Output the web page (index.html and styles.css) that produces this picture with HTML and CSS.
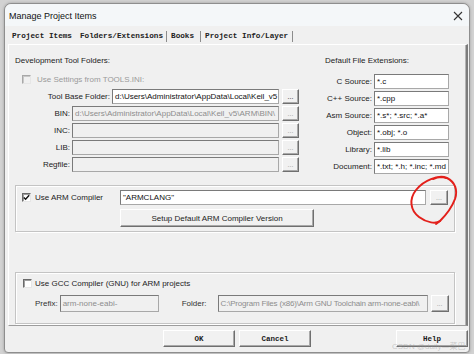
FILE: index.html
```html
<!DOCTYPE html>
<html lang="en">
<head>
  <meta charset="utf-8">
  <title>Manage Project Items</title>
  <meta name="viewport" content="width=device-width, initial-scale=1">
  <link rel="stylesheet" href="styles.css">
</head>
<body>

<!-- dialog window -->
<div class="window">
  <div class="titlebar">
    <span class="title">Manage Project Items</span>
    <svg class="close" width="10" height="10" viewBox="0 0 10 10"><path d="M1 1L9 9M9 1L1 9" stroke="#333" stroke-width="1.1" fill="none"/></svg>
  </div>

  <div class="tabs">
    <span class="tab first">Project Items</span>
    <span class="tab active">Folders/Extensions</span>
    <span class="tab books">Books</span>
    <span class="tab">Project Info/Layer</span>
  </div>

  <div class="panel">
    <div class="top">
      <!-- left: tool folders -->
      <div class="folders">
        <div class="heading">Development Tool Folders:</div>
        <div class="row">
          <span class="check off"></span>
          <span class="dim">Use Settings from TOOLS.INI:</span>
        </div>
        <div class="row">
          <span class="lbl wide">Tool Base Folder:</span>
          <span class="field">d:\Users\Administrator\AppData\Local\Keil_v5</span>
          <span class="btn dots">...</span>
        </div>
        <div class="row">
          <span class="lbl">BIN:</span>
          <span class="field ro">d:\Users\Administrator\AppData\Local\Keil_v5\ARM\BIN\</span>
          <span class="btn dots off">...</span>
        </div>
        <div class="row">
          <span class="lbl">INC:</span>
          <span class="field ro"></span>
          <span class="btn dots off">...</span>
        </div>
        <div class="row">
          <span class="lbl">LIB:</span>
          <span class="field ro"></span>
          <span class="btn dots off">...</span>
        </div>
        <div class="row">
          <span class="lbl">Regfile:</span>
          <span class="field ro"></span>
          <span class="btn dots off">...</span>
        </div>
      </div>

      <!-- right: file extensions -->
      <div class="exts">
        <div class="heading center">Default File Extensions:</div>
        <div class="row"><span class="lbl">C Source:</span><span class="field">*.c</span></div>
        <div class="row"><span class="lbl">C++ Source:</span><span class="field">*.cpp</span></div>
        <div class="row"><span class="lbl">Asm Source:</span><span class="field">*.s*; *.src; *.a*</span></div>
        <div class="row"><span class="lbl">Object:</span><span class="field">*.obj; *.o</span></div>
        <div class="row"><span class="lbl">Library:</span><span class="field">*.lib</span></div>
        <div class="row"><span class="lbl">Document:</span><span class="field">*.txt; *.h; *.inc; *.md</span></div>
      </div>
    </div>

    <!-- ARM compiler -->
    <div class="group arm">
      <div class="arm-left">
        <span class="check"><svg width="7" height="7" viewBox="0 0 7 7"><path d="M0.8 3.4L2.6 5.2L6.2 1.2" stroke="#111" stroke-width="1.4" fill="none"/></svg></span>
        <span>Use ARM Compiler</span>
      </div>
      <div class="arm-right">
        <div class="row">
          <span class="field">"ARMCLANG"</span>
          <span class="btn dots off">...</span>
        </div>
        <span class="btn setup">Setup Default ARM Compiler Version</span>
      </div>
    </div>

    <!-- GCC compiler -->
    <div class="group gcc">
      <div class="gcc-top">
        <span class="check"></span>
        <span>Use GCC Compiler (GNU) for ARM projects</span>
      </div>
      <div class="row gcc-row">
        <span class="prefix-lbl">Prefix:</span>
        <span class="field ro prefix">arm-none-eabi-</span>
        <span class="folder-lbl">Folder:</span>
        <span class="field ro folder">C:\Program Files (x86)\Arm GNU Toolchain arm-none-eabi\</span>
        <span class="btn dots off">...</span>
      </div>
    </div>
  </div>

  <div class="actions">
    <span class="btn push ok">OK</span>
    <span class="btn push">Cancel</span>
    <span class="btn push help">Help</span>
  </div>
</div>

<!-- hand-drawn mark over the browse button -->
<svg class="scribble" width="474" height="354" viewBox="0 0 474 354">
  <path d="M446 178C438 175 424 180 416 190C409 199 410 210 419 217C427 223 436 224 440 221C446 215 452 207 455 199C458 190 455 182 447 178C442 176 437 177 433 179" stroke="#e3201b" stroke-width="2" fill="none" stroke-linecap="round"/>
  <path d="M440 221L436 224" stroke="#e3201b" stroke-width="2" fill="none" stroke-linecap="round"/>
</svg>

<span class="mark">CSDN @daily—菜巴</span>

</body>
</html>
```

FILE: styles.css
```css
body {
  margin: 0;
  width: 474px;
  height: 354px;
  overflow: hidden;
  background: #d2d2d2;
  font-family: "Liberation Sans", Arial, sans-serif;
  font-size: 8px;
  color: #1c1c1c;
}

.window {
  position: relative;
  box-sizing: border-box;
  width: 466px;
  height: 350px;
  margin: 3px 0 0 4px;
  background: #f0f0f0;
  border: 1px solid #8e8e8e;
  border-radius: 7px 7px 4px 4px;
  box-shadow: 0 0 3px rgba(0, 0, 0, 0.25);
}

.titlebar {
  height: 22px;
  display: flex;
  align-items: center;
  justify-content: space-between;
  padding: 1px 6px 0 4px;
  box-sizing: border-box;
  background: #f4f7f9;
  border-radius: 7px 7px 0 0;
}

.title {
  font-size: 9px;
  color: #111;
}

.tabs {
  box-sizing: border-box;
  height: 18px;
  display: flex;
  align-items: flex-end;
  padding: 0 0 2px 7px;
  font-family: "Liberation Mono", "Courier New", monospace;
  font-weight: bold;
  font-size: 7.7px;
  color: #222;
}

.tab {
  padding: 0 4px;
  line-height: 11px;
  border-right: 1px solid #8c8c8c;
}

.tab.first {
  padding: 0;
  margin-right: 8px;
  border-right: none;
}

.tab.active {
  padding: 0 3px 0 0;
}

.tab.books {
  padding: 0 6px 0 4px;
}

/* tab page */
.panel {
  box-sizing: border-box;
  height: 282px;
  margin: 0 1px 0 3px;
  padding: 10px 0 0 6px;
  border-left: 1px solid #fff;
  border-top: 1px solid #fff;
  border-bottom: 1px solid #9c9c9c;
  border-right: 2px solid #7c7c7c;
  box-shadow: inset -1px 0 0 #b4b4b4;
}

.top {
  display: flex;
}

.heading {
  height: 12px;
  line-height: 12px;
  margin-bottom: 5px;
}

.heading.center {
  padding-left: 9px;
}

.folders {
  width: 284px;
  display: flex;
  flex-direction: column;
  gap: 2px;
}

.folders .heading {
  margin-bottom: 3px;
}

.exts {
  width: 133px;
  margin-left: 17px;
  display: flex;
  flex-direction: column;
  gap: 2px;
}

.row {
  display: flex;
  align-items: center;
  height: 15px;
}

.lbl {
  flex: none;
  width: 55px;
  text-align: right;
  padding-right: 2px;
}

.lbl.wide {
  width: 95px;
}

.exts .lbl {
  width: 56px;
}

.field {
  box-sizing: border-box;
  flex: 1;
  min-width: 0;
  height: 15px;
  line-height: 13px;
  padding-left: 2px;
  background: #fff;
  border: 1px solid #a8a8a8;
  border-top-color: #7a7a7a;
  border-left-color: #7a7a7a;
  white-space: nowrap;
  overflow: hidden;
  color: #111;
}

.field.ro {
  background: #f0f0f0;
  color: #8d8d8d;
}

.btn {
  box-sizing: border-box;
  display: flex;
  align-items: center;
  justify-content: center;
  background: #f1f1f1;
  border: 1px solid;
  border-color: #fff #6f6f6f #6f6f6f #fff;
  box-shadow: inset -1px -1px 0 #a9a9a9;
}

.dots {
  flex: none;
  width: 17px;
  height: 15px;
  margin-left: 3px;
  font-size: 7px;
  line-height: 8px;
  color: #222;
}

.dots.off {
  color: #9a9a9a;
}

.check {
  flex: none;
  box-sizing: border-box;
  width: 9px;
  height: 9px;
  display: flex;
  align-items: center;
  justify-content: center;
  background: #fff;
  border-top: 1px solid #6a6a6a;
  border-left: 1px solid #6a6a6a;
  border-right: 1px solid #e6e6e6;
  border-bottom: 1px solid #e6e6e6;
  box-shadow: inset 1px 1px 0 #a0a0a0;
}

.check.off {
  background: #f0f0f0;
  border-top-color: #a8a8a8;
  border-left-color: #a8a8a8;
  box-shadow: inset 1px 1px 0 #c8c8c8;
}

.folders .row .check {
  margin: 0 6px 0 7px;
}

.dim {
  color: #9a9a9a;
}

/* compiler groups */
.group {
  box-sizing: border-box;
  width: 440px;
  border: 1px solid #c4c4c4;
  box-shadow: 1px 1px 0 #fff, inset 1px 1px 0 #fff;
}

.arm {
  display: flex;
  margin-top: 11px;
  padding: 4px 0 4px 0;
}

.arm-left {
  flex: none;
  width: 104px;
  height: 15px;
  display: flex;
  align-items: center;
  gap: 4px;
  padding-left: 6px;
  box-sizing: border-box;
}

.arm-right {
  display: flex;
  flex-direction: column;
  gap: 4px;
}

.arm-right .row {
  width: 328px;
}

.arm-right .dots {
  width: 18px;
  margin-left: 4px;
}

.setup {
  width: 194px;
  height: 18px;
  font-size: 8px;
}

.gcc {
  margin-top: 40px;
  padding: 4px 0 11px 7px;
}

.gcc-top {
  height: 12px;
  display: flex;
  align-items: center;
  gap: 3px;
}

.gcc-row {
  margin-top: 6px;
  height: 17px;
}

.gcc-row .field {
  flex: none;
  height: 17px;
  line-height: 15px;
}

.prefix-lbl {
  margin-left: 12px;
  color: #333;
}

.prefix {
  width: 99px;
  margin-left: 2px;
}

.folder-lbl {
  margin-left: 23px;
  color: #333;
}

.folder {
  width: 210px;
  margin-left: 11px;
  letter-spacing: -0.2px;
}

.gcc-row .dots {
  width: 18px;
  height: 17px;
}

/* bottom buttons */
.actions {
  display: flex;
  padding-top: 4px;
}

.push {
  width: 72px;
  height: 17px;
  font-family: "Liberation Mono", "Courier New", monospace;
  font-weight: bold;
  font-size: 7.5px;
  color: #1a1a1a;
}

.push.ok {
  margin-left: 158px;
  margin-right: 4px;
}

.push.help {
  margin-left: auto;
  margin-right: 1px;
}

.scribble {
  position: absolute;
  left: 0;
  top: 0;
  pointer-events: none;
}

.mark {
  position: absolute;
  left: 392px;
  top: 340px;
  font-size: 8px;
  color: rgba(150, 150, 150, 0.45);
  font-family: "Liberation Sans", "Noto Sans CJK SC", sans-serif;
}
```
